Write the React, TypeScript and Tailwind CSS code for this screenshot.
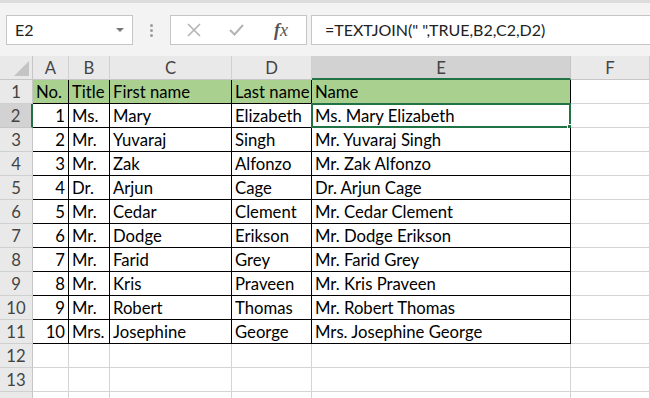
import React from "react";

const colNames = ["A", "B", "C", "D", "E", "F"];

type Row = [string, string, string, string, string];
const data: Row[] = [
  ["No.", "Title", "First name", "Last name", "Name"],
  ["1", "Ms.", "Mary", "Elizabeth", "Ms. Mary Elizabeth"],
  ["2", "Mr.", "Yuvaraj", "Singh", "Mr. Yuvaraj Singh"],
  ["3", "Mr.", "Zak", "Alfonzo", "Mr. Zak Alfonzo"],
  ["4", "Dr.", "Arjun", "Cage", "Dr. Arjun Cage"],
  ["5", "Mr.", "Cedar", "Clement", "Mr. Cedar Clement"],
  ["6", "Mr.", "Dodge", "Erikson", "Mr. Dodge Erikson"],
  ["7", "Mr.", "Farid", "Grey", "Mr. Farid Grey"],
  ["8", "Mr.", "Kris", "Praveen", "Mr. Kris Praveen"],
  ["9", "Mr.", "Robert", "Thomas", "Mr. Robert Thomas"],
  ["10", "Mrs.", "Josephine", "George", "Mrs. Josephine George"],
];

export default function App() {
  const rows = [];
  for (let r = 0; r < 14; r++) {
    const rowNum = r + 1;
    const isSelRow = rowNum === 2;
    const cells = [];
    cells.push(
      <div
        key="h"
        className={
          "h-[24px] flex items-center justify-center pt-[2px] border-b border-r text-[#444] " +
          (isSelRow
            ? "bg-[#d2d2d2] border-b-[#c6c6c6] border-r-[#217346] border-r-2"
            : "bg-[#e9e9e9] border-b-[#d0d0d0] border-r-[#c6c6c6]")
        }
      >
        {rowNum < 14 ? rowNum : ""}
      </div>
    );
    for (let c = 0; c < 6; c++) {
      const inTable = r < 11 && c < 5;
      const header = r === 0 && c < 5;
      const val = r < 11 && c < 5 ? data[r][c] : "";
      const rightAlign = c === 0 && r > 0 && r < 11;
      const selected = r === 1 && c === 4;
      cells.push(
        <div
          key={c}
          className={
            "relative h-[24px] flex items-center pt-[2px] whitespace-nowrap overflow-visible border-b border-r px-[3px] " +
            (inTable ? "border-black " : "border-[#d4d4d4] ") +
            (header ? "bg-[#a9d08e] " : "bg-white ") +
            (rightAlign ? "justify-end" : "justify-start")
          }
        >
          <span className="text-black">{val}</span>
          {selected && (
            <div className="absolute -left-px -top-px -right-[1px] -bottom-[1px] border-2 border-[#217346] pointer-events-none">
              <div className="absolute -right-[4px] -bottom-[4px] w-[6px] h-[6px] bg-[#217346] border border-white" />
            </div>
          )}
        </div>
      );
    }
    rows.push(
      <div key={r} className="contents">
        {cells}
      </div>
    );
  }

  return (
    <div
      className="w-[650px] h-[398px] overflow-hidden bg-white text-[16.7px] leading-none"
      style={{ fontFamily: "Lato, 'Liberation Sans', sans-serif" }}
    >
      {/* toolbar */}
      <div className="h-[56px] bg-[#f3f3f3] border-t-[3px] border-[#dcdcdc] flex items-start pt-[12px]">
        <div className="ml-[6px] w-[127px] h-[30px] bg-white border border-[#c6c6c6] flex items-center justify-between pl-[8px] pr-[8px]">
          <span className="text-[#222] text-[16px]">E2</span>
          <svg width="8" height="5" viewBox="0 0 8 5">
            <path d="M0 0 L8 0 L4 4 Z" fill="#777" />
          </svg>
        </div>
        <div className="w-[37px] h-[30px] flex flex-col items-center justify-center gap-[2px]">
          <div className="w-[3px] h-[3px] rounded-full bg-[#9b9b9b]" />
          <div className="w-[3px] h-[3px] rounded-full bg-[#9b9b9b]" />
          <div className="w-[3px] h-[3px] rounded-full bg-[#9b9b9b]" />
        </div>
        <div className="w-[137px] h-[30px] bg-white border border-[#c6c6c6] flex items-center">
          <div className="w-[45px] flex justify-center">
            <svg width="14" height="14" viewBox="0 0 14 14">
              <path d="M1 1 L13 13 M13 1 L1 13" stroke="#b4b4b4" strokeWidth="1.6" />
            </svg>
          </div>
          <div className="w-[40px] flex justify-center">
            <svg width="15" height="12" viewBox="0 0 15 12">
              <path d="M1 6 L5.5 10.5 L14 1" stroke="#b4b4b4" strokeWidth="2" fill="none" />
            </svg>
          </div>
          <div className="flex-1 flex justify-center">
            <span
              className="italic text-[18px] text-[#555]"
              style={{ fontFamily: "'Liberation Serif', serif" }}
            >
              <span className="font-bold">f</span>x
            </span>
          </div>
        </div>
        <div className="ml-[4px] flex-1 h-[30px] bg-white border border-[#c6c6c6] border-r-0 flex items-center pl-[13px]">
          <span className="text-[#222] text-[16px]">=TEXTJOIN(" ",TRUE,B2,C2,D2)</span>
        </div>
      </div>
      {/* grid */}
      <div className="grid grid-cols-[33px_36px_41px_122px_80px_259px_79px]">
        {/* column headers */}
        <div className="h-[24px] bg-[#e9e9e9] border-r border-b border-[#c6c6c6] relative flex items-end justify-end pr-[3px] pb-[3px]">
          <svg width="15" height="15" viewBox="0 0 15 15">
            <path d="M15 0 L15 15 L0 15 Z" fill="#c4c4c4" />
          </svg>
        </div>
        {colNames.map((n, i) => (
          <div
            key={n}
            className={
              "h-[24px] flex items-center justify-center pt-[2px] text-[#444] border-r " +
              (i === 4
                ? "bg-[#d2d2d2] border-r-[#c6c6c6] border-b-2 border-b-[#217346] text-[#222]"
                : "bg-[#e9e9e9] border-r-[#d0d0d0] border-b border-b-[#c6c6c6]")
            }
          >
            {n}
          </div>
        ))}
        {rows}
      </div>
    </div>
  );
}
